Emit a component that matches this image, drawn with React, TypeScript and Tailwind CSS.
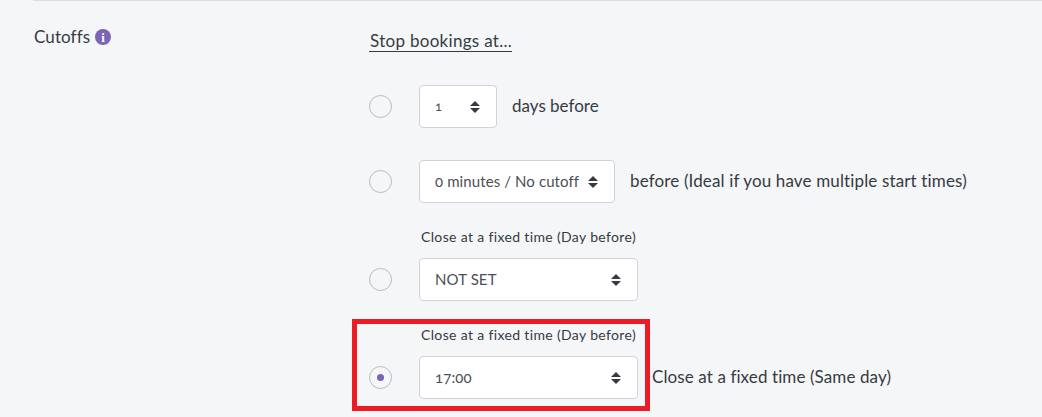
const Carets = () => (
  <svg width="12" height="14" viewBox="0 0 12 14" className="shrink-0">
    <path d="M6 1 L11 6 H1 Z" fill="#363b42" />
    <path d="M6 13 L11 8 H1 Z" fill="#363b42" />
  </svg>
);

const Radio = ({ checked }: { checked?: boolean }) => (
  <div className="w-[23px] h-[23px] shrink-0 rounded-full border border-[#b8babf] bg-[#f5f6f8] flex items-center justify-center">
    {checked && <div className="w-[7px] h-[7px] rounded-full bg-[#7a64b5]" />}
  </div>
);

const Select = ({ value, width, small }: { value: string; width: string; small?: boolean }) => (
  <div className={`${width} h-[43px] shrink-0 bg-white border border-[#cfd2da] rounded-[4px] pl-[15px] pr-[15px] flex items-center justify-between text-[#4a4f57] ${small ? "text-[13px]" : "text-[15px] tracking-[0.1px]"}`}>
    <span className="whitespace-nowrap [font-variant-numeric:oldstyle-nums]">{value}</span>
    <Carets />
  </div>
);

export default function App() {
  return (
    <div className="w-[1042px] h-[417px] overflow-hidden bg-[#f5f6f8] pl-[33px] font-['Lato','Liberation_Sans',sans-serif] text-[#363b42]">
      <div className="border-t border-[#dcdee2] flex">
        <div className="w-[336px] shrink-0 pl-px pt-[25px] flex items-center h-fit gap-[5px] text-[17px] tracking-[0.1px] leading-[22px]">
          Cutoffs
          <div className="w-[16px] h-[16px] rounded-full bg-[#7a64b5] text-white flex items-center justify-center text-[13px] font-bold font-['Liberation_Serif',serif] leading-none">
            i
          </div>
        </div>

        <div className="pt-[28px]">
          <div className="inline-block text-[17px] leading-[20px] pl-px border-b border-[#363b42] tracking-[0.3px]">
            Stop bookings at...
          </div>

          <div className="mt-[32px] flex items-center">
            <Radio />
            <div className="ml-[27px]">
              <Select value="1" width="w-[78px]" small />
            </div>
            <span className="ml-[15px] text-[17px] -translate-y-px">days before</span>
          </div>

          <div className="mt-[32px] flex items-center">
            <Radio />
            <div className="ml-[27px]">
              <Select value="0 minutes / No cutoff" width="w-[196px]" />
            </div>
            <span className="ml-[15px] text-[17px] tracking-[0.14px] -translate-y-px whitespace-nowrap">before (Ideal if you have multiple start times)</span>
          </div>

          <div className="mt-[25px] ml-[52px] text-[14px] tracking-[0.35px] leading-[18px]">Close at a fixed time (Day before)</div>
          <div className="mt-[12px] flex items-center">
            <Radio />
            <div className="ml-[27px]">
              <Select value="NOT SET" width="w-[219px]" />
            </div>
          </div>

          <div className="relative">
            <div className="absolute left-[-17px] top-[18px] w-[298px] h-[92px] border-[5px] border-[#ed1c24]" />
            <div className="pt-[25px] ml-[52px] text-[14px] tracking-[0.35px] leading-[18px]">Close at a fixed time (Day before)</div>
            <div className="mt-[12px] flex items-center">
              <Radio checked />
              <div className="ml-[27px]">
                <Select value="17:00" width="w-[219px]" />
              </div>
              <span className="ml-[14px] text-[17px] tracking-[0.1px] -translate-y-px whitespace-nowrap">Close at a fixed time (Same day)</span>
            </div>
          </div>
        </div>
      </div>
    </div>
  );
}
